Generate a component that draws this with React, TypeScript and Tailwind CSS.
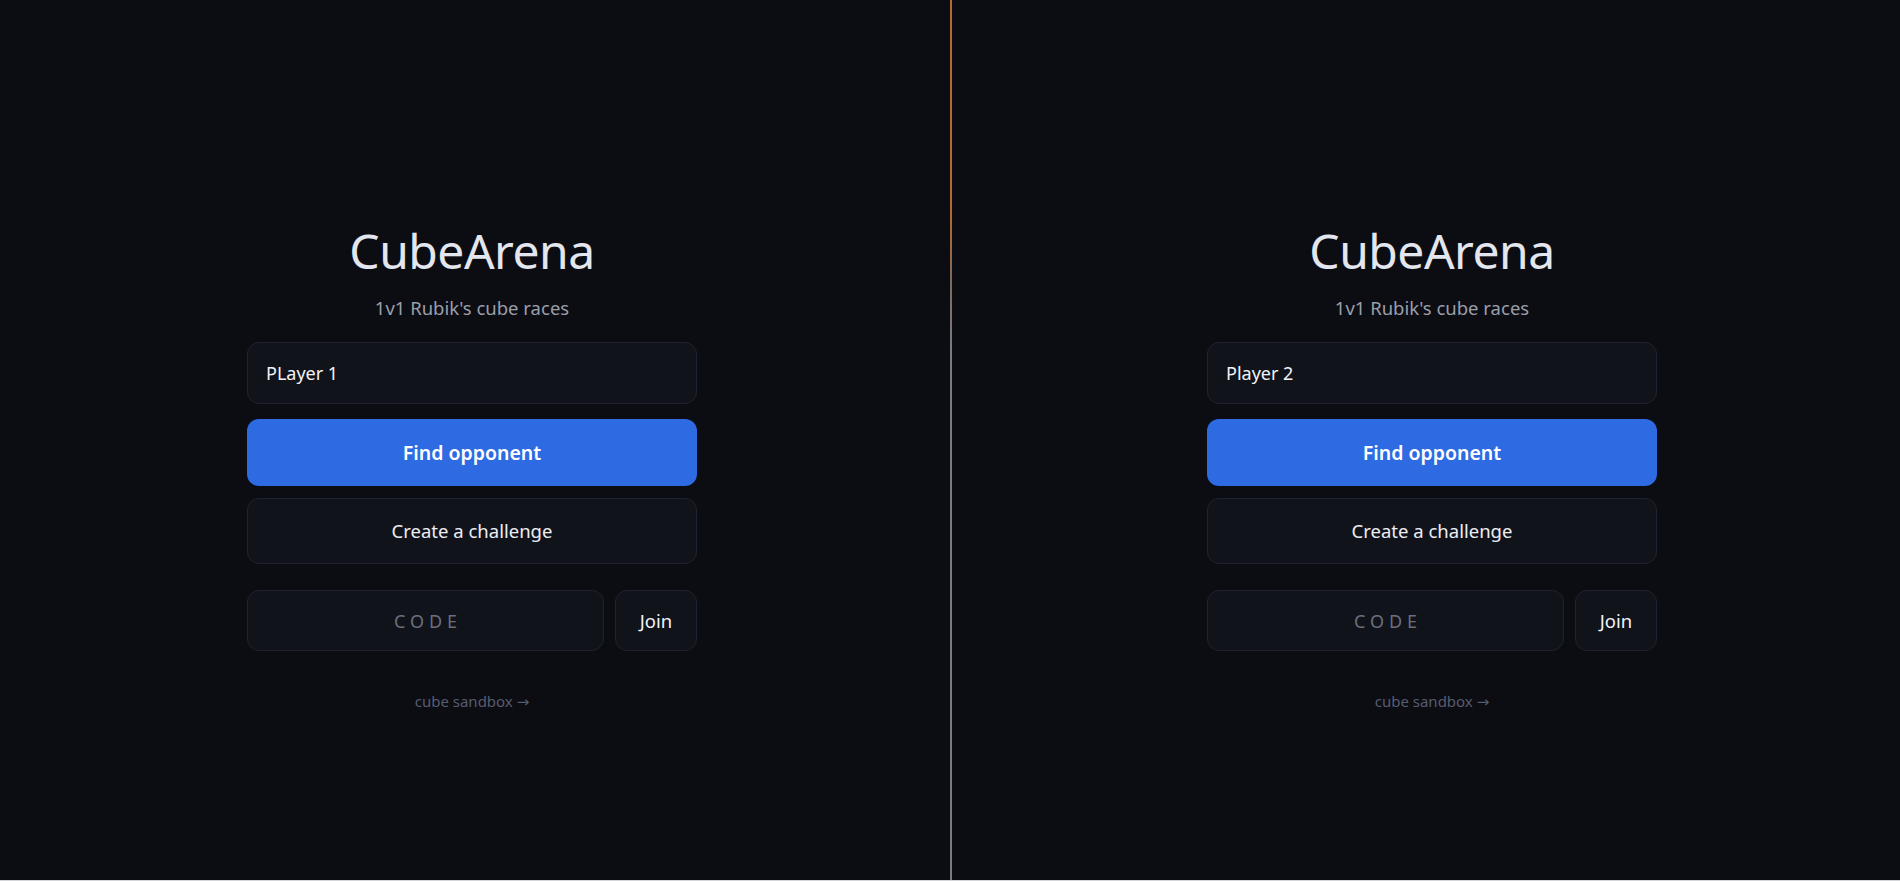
import { useState } from "react"

type LobbyProps = {
    defaultName: string
}

function Lobby({ defaultName }: LobbyProps) {
    const [name, setName] = useState(defaultName)
    const [code, setCode] = useState('')

    return (
        <div className="flex flex-col items-center w-[450px] pt-[227px]">
            <h1 className="text-[48px] leading-none tracking-[-0.5px] text-[#e3e6ef] font-normal">CubeArena</h1>
            <p className="mt-[21px] text-[18.5px] leading-[24px] text-[#9a9eab]">1v1 Rubik's cube races</p>

            <input
                type="text"
                value={name}
                onChange={e => setName(e.target.value)}
                className="mt-[22px] w-full h-[62px] pl-[18px] text-[18px] text-[#f1f3f8] bg-[#11131b] border border-[#1f2230] rounded-[12px] outline-none"
            />

            <button className="mt-[15px] w-full h-[67px] text-[19.5px] font-semibold text-white bg-[#2e6be3] rounded-[12px] cursor-pointer">
                Find opponent
            </button>

            <button className="mt-[12px] w-full h-[66px] text-[18.5px] text-[#eceef4] bg-[#11131b] border border-[#1f2230] rounded-[12px] cursor-pointer">
                Create a challenge
            </button>

            <div className="mt-[26px] w-full flex gap-[11px]">
                <input
                    type="text"
                    placeholder="CODE"
                    value={code}
                    onChange={e => setCode(e.target.value.toUpperCase())}
                    className="flex-1 min-w-0 h-[61px] text-center text-[18px] tracking-[5px] pl-[5px] text-[#e3e6ef] placeholder:text-[#6b6f7c] bg-[#11131b] border border-[#1f2230] rounded-[12px] outline-none"
                />
                <button className="w-[82px] h-[61px] text-[18.5px] text-[#f1f3f8] bg-[#11131b] border border-[#1f2230] rounded-[12px] cursor-pointer">
                    Join
                </button>
            </div>

            <a href="#" className="mt-[40px] text-[15px] leading-[20px] text-[#575b70]">
                cube sandbox <span className="font-['DejaVu_Sans']">→</span>
            </a>
        </div>
    )
}

export default function App() {
    return (
        <div
            className="flex w-full h-[881px] bg-[#0c0d12] border-b border-[#d4d5d9] overflow-hidden"
            style={{ fontFamily: '"Noto Sans", "Open Sans", sans-serif' }}
        >
            <div className="w-[950px] shrink-0 flex justify-center pr-[6px]">
                <Lobby defaultName="PLayer 1" />
            </div>
            <div className="w-[2px] shrink-0 bg-[linear-gradient(to_bottom,#b8692d_0%,#b8692d_24%,#7d6a5c_32%,#7b7b84_40%,#7b7b84_100%)]" />
            <div className="flex-1 flex justify-center pl-[12px]">
                <Lobby defaultName="Player 2" />
            </div>
        </div>
    )
}
